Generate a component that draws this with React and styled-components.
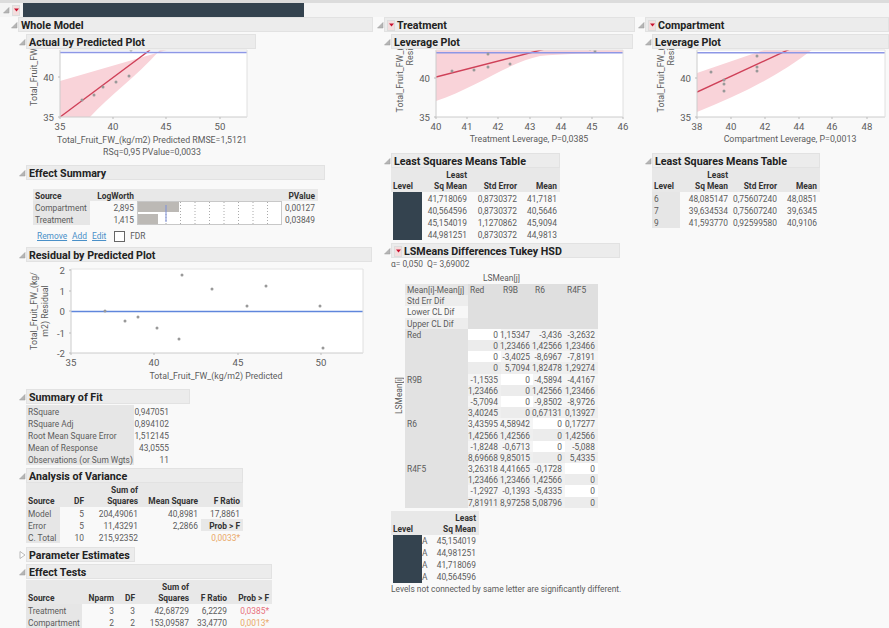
import React from "react";
import styled, { createGlobalStyle } from "styled-components";

const GlobalStyle = createGlobalStyle`
  html, body {
    margin: 0;
    padding: 0;
    background: #f9f9f9;
  }
  body {
    font-family: Roboto, "Open Sans", sans-serif;
    font-size: 8.4px;
    color: #5c5c5c;
  }
`;

const NAVY = "#34434f";
const ORANGE = "#e9a868";
const RED = "#e8707c";

const Page = styled.div`
  width: 889px;
  height: 628px;
  overflow: hidden;
  background: #f9f9f9;
`;

const Stripe = styled.div`
  height: 3px;
  background: #dcdcdc;
`;

const TopBar = styled.div`
  height: 14px;
  display: flex;
  align-items: center;
  padding-left: 3px;
  background: #f4f4f4;
`;

const Redacted = styled.div`
  width: 281px;
  height: 14px;
  margin-left: 1px;
  background: ${NAVY};
`;

const Columns = styled.div`
  display: grid;
  grid-template-columns: 377px 261px 251px;
`;

const Column = styled.div`
  display: flex;
  flex-direction: column;
  min-width: 0;
`;

const Outline = styled.div`
  display: flex;
  align-items: center;
  height: 15px;
  margin-top: ${(p) => p.$top || 0}px;
  margin-left: ${(p) => p.$left || 0}px;
`;

const Bar = styled.div`
  display: flex;
  align-items: center;
  flex: ${(p) => (p.$width ? "none" : 1)};
  width: ${(p) => (p.$width ? `${p.$width}px` : "auto")};
  height: 15px;
  box-sizing: border-box;
  padding: 1px 0 0 2px;
  background: #ececec;
  border: 1px solid #e2e2e2;
  font-size: 10.7px;
  font-weight: 700;
  color: #222;
  white-space: nowrap;
`;

const TriangleBox = styled.svg`
  flex: none;
  display: block;
`;

const Toggle = ({ closed }) => (
  <TriangleBox width="7" height="8" viewBox="0 0 7 8">
    {closed ? (
      <path d="M1 0.5 L6 4 L1 7.5 Z" fill="#fff" stroke="#aaa" strokeWidth="0.8" />
    ) : (
      <path d="M0.5 7 L6 7 L6 1.5 Z" fill="#b5b5b5" stroke="#999" strokeWidth="0.5" />
    )}
  </TriangleBox>
);

const MenuButton = styled.span`
  flex: none;
  display: flex;
  align-items: center;
  justify-content: center;
  width: 8px;
  height: 11px;
  margin-right: 2px;
  background: #f3dede;
  border: 1px solid #dddddd;
  box-sizing: border-box;
`;

const RedMenu = () => (
  <MenuButton>
    <svg width="5" height="4" viewBox="0 0 5 4">
      <path d="M0 0.5 H5 L2.5 3.5 Z" fill="#c8102e" />
    </svg>
  </MenuButton>
);

const Section = ({ left, top, width, closed, menu, children }) => (
  <Outline $left={left} $top={top}>
    <Toggle closed={closed} />
    <Bar $width={width}>
      {menu && <RedMenu />}
      {children}
    </Bar>
  </Outline>
);

const Figure = styled.svg`
  display: block;
  flex: none;
`;

const Axis = styled.text`
  font-family: Roboto, "Open Sans", sans-serif;
  font-size: ${(p) => p.$size || 8.8}px;
  fill: #5c5c5c;
`;

const Plot = ({ view, box, xTicks, yTicks, band, line, zero, points, xLabels, yLabels }) => {
  const [x0, y0, w, h] = view;
  const [l, t, r, b] = box;
  const id = `clip-${l}-${t}`;
  return (
    <Figure width={w} height={h} viewBox={`${x0} ${y0} ${w} ${h}`}>
      <defs>
        <clipPath id={id}>
          <rect x={l} y={t} width={r - l} height={b - t} />
        </clipPath>
      </defs>
      <rect x={l} y={t} width={r - l} height={b - t} fill="#fff" />
      <g clipPath={`url(#${id})`}>
        {band && <path d={band} fill="#f9d3d9" />}
        {line && <line x1={line[0]} y1={line[1]} x2={line[2]} y2={line[3]} stroke="#cf4058" strokeWidth="1.4" />}
        <line x1={l} y1={zero} x2={r} y2={zero} stroke={band ? "#8d97e6" : "#5f86dc"} strokeWidth="1.4" />
        {points.map(([px, py], i) => (
          <circle key={i} cx={px} cy={py} r="1.5" fill="#999" />
        ))}
      </g>
      <line x1={l} y1={t} x2={l} y2={b} stroke="#ccc" />
      <line x1={l} y1={b} x2={r} y2={b} stroke="#ccc" />
      <line x1={l} y1={t} x2={r} y2={t} stroke="#e4e4e4" />
      <line x1={r} y1={t} x2={r} y2={b} stroke="#e0e0e0" />
      {xTicks.map(([px, label]) => (
        <g key={px}>
          <line x1={px} y1={b} x2={px} y2={b + 2} stroke="#bbb" />
          <Axis x={px} y={b + 13} textAnchor="middle" $size={9.6}>{label}</Axis>
        </g>
      ))}
      {yTicks.map(([py, label]) => (
        <g key={py}>
          <line x1={l} y1={py} x2={l - 2} y2={py} stroke="#bbb" />
          <Axis x={l - 6} y={py + 3.5} textAnchor="end" $size={9.6}>{label}</Axis>
        </g>
      ))}
      {xLabels.map(([px, py, label]) => (
        <Axis key={label} x={px} y={py} textAnchor="middle">{label}</Axis>
      ))}
      {yLabels.map(([px, py, label]) => (
        <Axis key={label} x={px} y={py} textAnchor="middle" transform={`rotate(-90 ${px} ${py})`}>{label}</Axis>
      ))}
    </Figure>
  );
};

const Table = styled.div`
  display: grid;
  grid-template-columns: ${(p) => p.$cols};
  grid-auto-rows: ${(p) => p.$row || 12}px;
  width: max-content;
  margin-top: ${(p) => p.$top || 0}px;
  margin-left: ${(p) => p.$left || 0}px;
`;

const Cell = styled.div`
  display: flex;
  align-items: center;
  justify-content: ${(p) => (p.$left ? "flex-start" : "flex-end")};
  padding: 1px 3px 0 2px;
  box-sizing: border-box;
  min-width: 0;
  white-space: nowrap;
  background: ${(p) => p.$bg || "transparent"};
  color: ${(p) => p.$color || "#5c5c5c"};
  font-weight: ${(p) => (p.$bold ? 700 : 400)};
  grid-row: ${(p) => (p.$span ? `span ${p.$span}` : "auto")};
`;

const Label = styled(Cell).attrs({ $left: true, $bg: "#e6e6e6" })``;

const Head = styled(Cell).attrs({ $bold: true, $bg: "#e8e8e8", $color: "#333" })`
  grid-row: span 2;
  align-items: flex-end;
  white-space: pre-line;
  text-align: right;
  line-height: 11px;
`;

const HeadLeft = styled(Head).attrs({ $left: true })`
  text-align: left;
`;

const RedactedCell = styled.div`
  grid-row: span ${(p) => p.$span};
  background: ${NAVY};
  margin-left: 2px;
  width: ${(p) => p.$width}px;
  z-index: 1;
`;

const Links = styled.div`
  display: flex;
  align-items: center;
  gap: 5px;
  height: 22px;
  margin-left: 37px;
`;

const Link = styled.a`
  color: #4a90c8;
  text-decoration: underline;
`;

const CheckBox = styled.span`
  width: 9px;
  height: 9px;
  margin-left: 3px;
  background: #fff;
  border: 1px solid #666;
`;

const ChartCell = styled(Figure)`
  grid-row: span 2;
`;

const EffectChart = () => (
  <ChartCell width="145" height="24" viewBox="0 0 145 24">
    <rect x="0.5" y="0.5" width="144" height="23" fill="#fff" stroke="#c8c8c8" />
    {[14.5, 29, 43.5, 58, 72.5, 87, 101.5, 116, 130.5].map((x) => (
      <line key={x} x1={x} y1="1" x2={x} y2="23" stroke="#aaa" strokeDasharray="1 2" />
    ))}
    <rect x="1" y="1" width="41" height="10" fill="#bcb9b5" />
    <rect x="1" y="13" width="20" height="10" fill="#bcb9b5" />
    <line x1="29" y1="4" x2="29" y2="21" stroke="#7d8fd8" />
  </ChartCell>
);

const Caption = styled.div`
  margin-top: ${(p) => p.$top || 0}px;
  margin-left: ${(p) => p.$left || 0}px;
  width: ${(p) => (p.$width ? `${p.$width}px` : "auto")};
  height: ${(p) => p.$height || 12}px;
  line-height: ${(p) => p.$height || 12}px;
  text-align: ${(p) => (p.$width ? "center" : "left")};
  white-space: pre;
`;

const MatrixWrap = styled.div`
  display: flex;
  margin-left: 17px;
`;

const VerticalLabel = styled.div`
  writing-mode: vertical-rl;
  transform: rotate(180deg);
  align-self: center;
  width: 11px;
  text-align: center;
`;

const MatrixHead = styled(Cell).attrs({ $left: true, $span: 4 })`
  align-items: flex-start;
`;

const matrixCols = ["Red", "R9B", "R6", "R4F5"];
const matrixRows = [
  ["Red", [["0", "1,15347", "-3,436", "-3,2632"], ["0", "1,23466", "1,42566", "1,23466"], ["0", "-3,4025", "-8,6967", "-7,8191"], ["0", "5,7094", "1,82478", "1,29274"]]],
  ["R9B", [["-1,1535", "0", "-4,5894", "-4,4167"], ["1,23466", "0", "1,42566", "1,23466"], ["-5,7094", "0", "-9,8502", "-8,9726"], ["3,40245", "0", "0,67131", "0,13927"]]],
  ["R6", [["3,43595", "4,58942", "0", "0,17277"], ["1,42566", "1,42566", "0", "1,42566"], ["-1,8248", "-0,6713", "0", "-5,088"], ["8,69668", "9,85015", "0", "5,4335"]]],
  ["R4F5", [["3,26318", "4,41665", "-0,1728", "0"], ["1,23466", "1,23466", "1,42566", "0"], ["-1,2927", "-0,1393", "-5,4335", "0"], ["7,81911", "8,97258", "5,08796", "0"]]],
];

const matrixBg = (row, col, group) => {
  if (col !== group) return row % 2 ? "#efefef" : "#f5f5f5";
  return row % 2 ? "#ececec" : "#ffffff";
};

const Matrix = () => (
  <Table $cols="63px 33px 32px 32px 33px" $row={11.2}>
    <Cell $left $bg="#e6e6e6">Mean[i]-Mean[j]</Cell>
    {matrixCols.map((c) => (
      <MatrixHead key={c} $bg="#dfdfdf">{c}</MatrixHead>
    ))}
    <Cell $left $bg="#ededed">Std Err Dif</Cell>
    <Cell $left $bg="#f7f7f7">Lower CL Dif</Cell>
    <Cell $left $bg="#ededed">Upper CL Dif</Cell>
    {matrixRows.map(([name, rows], g) => (
      <React.Fragment key={name}>
        <MatrixHead $bg="#e2e2e2">{name}</MatrixHead>
        {rows.map((row, r) =>
          row.map((v, c) => (
            <Cell key={`${r}-${c}`} $bg={matrixBg(r, c, g)}>{v}</Cell>
          ))
        )}
      </React.Fragment>
    ))}
  </Table>
);

const Spacer = styled.span`
  width: 2px;
`;

const App = () => (
  <Page>
    <GlobalStyle />
    <Stripe />
    <TopBar>
      <Toggle />
      <Spacer />
      <RedMenu />
      <Redacted />
    </TopBar>
    <Columns>
      <Column>
        <Section left={11} width={355}>Whole Model</Section>
        <Section left={19} top={2} width={230}>Actual by Predicted Plot</Section>
        <Plot
          view={[0, 49, 377, 116]}
          box={[60, 50, 247, 117]}
          xTicks={[[60, "35"], [113, "40"], [166, "45"], [220, "50"]]}
          yTicks={[[77, "40"], [117, "35"]]}
          band="M60 81 L167 50 L160 50 C135 78 110 95 90 117 L60 117 Z"
          line={[60, 117, 150, 50]}
          zero={52.5}
          points={[[82, 100], [94, 95], [103, 87], [116, 82], [129, 76], [131, 50]]}
          xLabels={[[152, 143, "Total_Fruit_FW_(kg/m2) Predicted RMSE=1,5121"], [152, 155, "RSq=0,95 PValue=0,0033"]]}
          yLabels={[[37, 77, "Total_Fruit_FW"]]}
        />
        <Section left={19} width={299}>Effect Summary</Section>
        <Table $cols="57px 47px 145px 36px" $left={33} $top={9}>
          <Cell $left $bold $bg="#e8e8e8" $color="#333">Source</Cell>
          <Cell $bold $bg="#e8e8e8" $color="#333">LogWorth</Cell>
          <Cell $bg="#e8e8e8" />
          <Cell $bold $bg="#e8e8e8" $color="#333">PValue</Cell>
          <Label>Compartment</Label>
          <Cell>2,895</Cell>
          <EffectChart />
          <Cell>0,00127</Cell>
          <Label>Treatment</Label>
          <Cell>1,415</Cell>
          <Cell>0,03849</Cell>
        </Table>
        <Links>
          <Link>Remove</Link>
          <Link>Add</Link>
          <Link>Edit</Link>
          <CheckBox />
          <span>FDR</span>
        </Links>
        <Section left={19} width={346}>Residual by Predicted Plot</Section>
        <Plot
          view={[0, 263, 377, 127]}
          box={[71, 270, 363, 354]}
          xTicks={[[71, "35"], [154, "40"], [238, "45"], [321, "50"]]}
          yTicks={[[271, "2"], [292, "1"], [312, "0"], [334, "-1"], [354, "-2"]]}
          zero={312.5}
          points={[[105, 312], [125, 322], [138, 318], [157, 329], [179, 340], [182, 276], [212, 290], [247, 307], [266, 287], [320, 307], [323, 349]]}
          xLabels={[[216, 380, "Total_Fruit_FW_(kg/m2) Predicted"]]}
          yLabels={[[37, 312, "Total_Fruit_FW_(kg/"], [48, 312, "m2) Residual"]]}
        />
        <Section left={19} width={164}>Summary of Fit</Section>
        <Table $cols="108px 38px" $left={26} $top={1}>
          <Label>RSquare</Label>
          <Cell>0,947051</Cell>
          <Label>RSquare Adj</Label>
          <Cell>0,894102</Cell>
          <Label>Root Mean Square Error</Label>
          <Cell>1,512145</Cell>
          <Label>Mean of Response</Label>
          <Cell>43,0555</Cell>
          <Label>Observations (or Sum Wgts)</Label>
          <Cell>11</Cell>
        </Table>
        <Section left={19} top={3} width={217}>Analysis of Variance</Section>
        <Table $cols="34px 27px 54px 60px 42px" $left={26}>
          <HeadLeft>Source</HeadLeft>
          <Head>DF</Head>
          <Head>{"Sum of\nSquares"}</Head>
          <Head>Mean Square</Head>
          <Head>F Ratio</Head>
          <Label>Model</Label>
          <Cell>5</Cell>
          <Cell>204,49061</Cell>
          <Cell>40,8981</Cell>
          <Cell>17,8861</Cell>
          <Label>Error</Label>
          <Cell>5</Cell>
          <Cell>11,43291</Cell>
          <Cell>2,2866</Cell>
          <Cell $bold $bg="#e8e8e8" $color="#333">Prob &gt; F</Cell>
          <Label>C. Total</Label>
          <Cell>10</Cell>
          <Cell>215,92352</Cell>
          <Cell />
          <Cell $color={ORANGE}>0,0033*</Cell>
        </Table>
        <Section left={19} top={4} width={109} closed>Parameter Estimates</Section>
        <Section left={19} top={2} width={246}>Effect Tests</Section>
        <Table $cols="56px 35px 21px 54px 38px 42px" $left={26} $top={1}>
          <HeadLeft>Source</HeadLeft>
          <Head>Nparm</Head>
          <Head>DF</Head>
          <Head>{"Sum of\nSquares"}</Head>
          <Head>F Ratio</Head>
          <Head>Prob &gt; F</Head>
          <Label>Treatment</Label>
          <Cell>3</Cell>
          <Cell>3</Cell>
          <Cell>42,68729</Cell>
          <Cell>6,2229</Cell>
          <Cell $color={RED}>0,0385*</Cell>
          <Label>Compartment</Label>
          <Cell>2</Cell>
          <Cell>2</Cell>
          <Cell>153,09587</Cell>
          <Cell>33,4770</Cell>
          <Cell $color={ORANGE}>0,0013*</Cell>
        </Table>
      </Column>

      <Column>
        <Section menu width={251}>Treatment</Section>
        <Section left={7} top={2} width={242}>Leverage Plot</Section>
        <Plot
          view={[377, 49, 261, 104]}
          box={[436, 50, 623, 117]}
          xTicks={[[436, "40"], [467, "41"], [498, "42"], [530, "43"], [561, "44"], [592, "45"], [623, "46"]]}
          yTicks={[[78, "40"], [117, "35"]]}
          band="M436 50 L623 50 L623 53 C590 53 560 54 540 56 C510 62 475 88 436 101 Z"
          line={[436, 77, 545, 49]}
          zero={52.7}
          points={[[452, 71], [474, 70], [488, 67], [488, 54], [510, 64], [590, 49], [595, 51]]}
          xLabels={[[529, 142, "Treatment Leverage, P=0,0385"]]}
          yLabels={[[403, 80, "Total_Fruit_FW_("], [413, 57, "Resi"]]}
        />
        <Section left={7} width={169}>Least Squares Means Table</Section>
        <Table $cols="31px 48px 50px 40px" $left={14}>
          <HeadLeft>Level</HeadLeft>
          <Head>{"Least\nSq Mean"}</Head>
          <Head>Std Error</Head>
          <Head>Mean</Head>
          <RedactedCell $span={4} $width={29} />
          <Cell>41,718069</Cell>
          <Cell>0,8730372</Cell>
          <Cell>41,7181</Cell>
          <Cell>40,564596</Cell>
          <Cell>0,8730372</Cell>
          <Cell>40,5646</Cell>
          <Cell>45,154019</Cell>
          <Cell>1,1270862</Cell>
          <Cell>45,9094</Cell>
          <Cell>44,981251</Cell>
          <Cell>0,8730372</Cell>
          <Cell>44,9813</Cell>
        </Table>
        <Section left={7} top={3} width={229} menu>LSMeans Differences Tukey HSD</Section>
        <Caption $left={14}>{"α= 0,050  Q= 3,69002"}</Caption>
        <Caption $left={28} $top={3} $height={11} $width={193}>LSMean[j]</Caption>
        <MatrixWrap>
          <VerticalLabel>LSMean[i]</VerticalLabel>
          <Matrix />
        </MatrixWrap>
        <Table $cols="29px 10px 49px" $left={14} $top={3}>
          <HeadLeft>Level</HeadLeft>
          <Head />
          <Head>{"Least\nSq Mean"}</Head>
          <RedactedCell $span={4} $width={29} />
          <Cell $left>A</Cell>
          <Cell>45,154019</Cell>
          <Cell $left>A</Cell>
          <Cell>44,981251</Cell>
          <Cell $left>A</Cell>
          <Cell>41,718069</Cell>
          <Cell $left>A</Cell>
          <Cell>40,564596</Cell>
        </Table>
        <Caption $left={14}>Levels not connected by same letter are significantly different.</Caption>
      </Column>

      <Column>
        <Section menu left={0}>Compartment</Section>
        <Section left={7} top={2}>Leverage Plot</Section>
        <Plot
          view={[638, 49, 251, 104]}
          box={[697, 50, 885, 117]}
          xTicks={[[697, "38"], [731, "40"], [765, "42"], [799, "44"], [832, "46"], [867, "48"]]}
          yTicks={[[78, "40"], [117, "35"]]}
          band="M697 73 L767 49 L813 49 C780 75 740 95 697 112 Z"
          line={[697, 92, 790, 49]}
          zero={52.7}
          points={[[711, 72], [724, 80], [724, 84], [724, 91], [757, 56], [757, 67], [757, 71]]}
          xLabels={[[790, 142, "Compartment Leverage, P=0,0013"]]}
          yLabels={[[664, 80, "Total_Fruit_FW_("], [674, 57, "Resi"]]}
        />
        <Section left={7} width={168}>Least Squares Means Table</Section>
        <Table $cols="28px 51px 49px 40px" $left={14}>
          <HeadLeft>Level</HeadLeft>
          <Head>{"Least\nSq Mean"}</Head>
          <Head>Std Error</Head>
          <Head>Mean</Head>
          <Label>6</Label>
          <Cell>48,085147</Cell>
          <Cell>0,75607240</Cell>
          <Cell>48,0851</Cell>
          <Label>7</Label>
          <Cell>39,634534</Cell>
          <Cell>0,75607240</Cell>
          <Cell>39,6345</Cell>
          <Label>9</Label>
          <Cell>41,593770</Cell>
          <Cell>0,92599580</Cell>
          <Cell>40,9106</Cell>
        </Table>
      </Column>
    </Columns>
  </Page>
);

export default App;
